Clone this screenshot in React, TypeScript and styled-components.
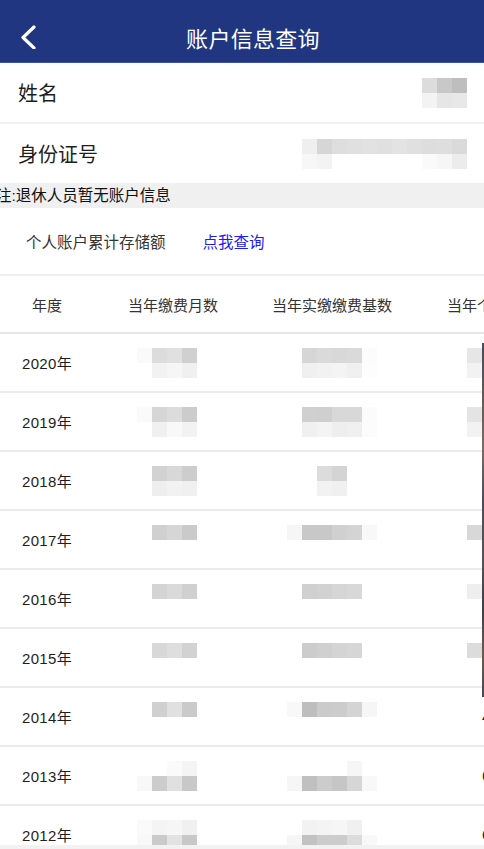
import React from "react";
import styled, { createGlobalStyle } from "styled-components";

const GlobalStyle = createGlobalStyle`
    html, body {
        margin: 0;
        padding: 0;
        background: #ffffff;
        font-family: "Liberation Sans", "Noto Sans CJK SC", sans-serif;
        overflow: hidden;
    }
`;

const Page = styled.div`
    position: relative;
    display: flex;
    flex-direction: column;
    width: 484px;
    height: 849px;
    overflow: hidden;
    background: #ffffff;
`;

const Header = styled.header`
    display: flex;
    align-items: center;
    flex: none;
    box-sizing: border-box;
    height: 63px;
    padding-top: 12px;
    background: #203680;
    border-bottom: 1px solid #3a52a6;
    color: #ffffff;
`;

const BackButton = styled.button`
    display: flex;
    align-items: center;
    justify-content: center;
    width: 22px;
    height: 30px;
    margin-left: 17px;
    padding: 0;
    border: none;
    background: transparent;
    color: #ffffff;
`;

const Title = styled.h1`
    flex: 1;
    margin: 0 0 0 -39px;
    padding-left: 22px;
    font-size: 22px;
    font-weight: 400;
    text-align: center;
    letter-spacing: 0.3px;
`;

const InfoRow = styled.div<{ $last?: boolean }>`
    display: flex;
    align-items: center;
    justify-content: space-between;
    flex: none;
    height: 59px;
    padding: 0 17px 0 18px;
    border-bottom: ${p => (p.$last ? "none" : "2px solid #f2f2f2")};
    font-size: 20px;
    color: #1e1e1e;
`;

const Note = styled.div`
    flex: none;
    height: 25px;
    line-height: 25px;
    text-indent: -4px;
    background: #f0f0f0;
    font-size: 15.5px;
    color: #111111;
    white-space: nowrap;
`;

const QueryRow = styled.div`
    display: flex;
    align-items: center;
    flex: none;
    gap: 37px;
    height: 66px;
    padding-left: 26px;
    border-bottom: 2px solid #f0f0f0;
    font-size: 15.5px;
`;

const QueryLabel = styled.span`
    color: #333333;
`;

const QueryLink = styled.a`
    color: #1c1cf5;
    text-decoration: none;
`;

const TableArea = styled.div`
    flex: 1;
    min-height: 0;
    overflow: hidden;
`;

const Table = styled.div`
    width: 562px;
`;

const TableRow = styled.div<{ $head?: boolean }>`
    display: grid;
    grid-template-columns: 94px 158px 160px 150px;
    align-items: center;
    height: ${p => (p.$head ? 56 : 57)}px;
    border-bottom: 2px solid ${p => (p.$head ? "#e6e6e6" : "#ebebeb")};
    font-size: 15px;
    color: ${p => (p.$head ? "#333333" : "#1e1e1e")};
`;

const Cell = styled.div<{ $pad?: number }>`
    display: flex;
    align-items: center;
    justify-content: ${p => (p.$pad === undefined ? "center" : "flex-start")};
    padding-left: ${p => p.$pad ?? 0}px;
    white-space: nowrap;
`;

const YearText = styled.span`
    letter-spacing: 0.3px;
`;

const Footer = styled.div`
    flex: none;
    height: 4px;
    background: #f2f2f2;
`;

const Mosaic = styled.div`
    display: flex;
    flex-direction: column;
`;

const MosaicLine = styled.div`
    display: flex;
`;

const Pixel = styled.div<{ $shade: string }>`
    width: 15px;
    height: 15px;
    background: ${p => p.$shade};
`;

const EdgeStrip = styled.div`
    position: absolute;
    right: 0;
    top: 343px;
    width: 2px;
    height: 354px;
    background: linear-gradient(180deg, #4a4a5a 0%, #6e5e58 20%, #7a6a60 30%, #4e4a5c 45%, #5c5056 60%, #3e3e4e 75%, #6c5a4e 88%, #4a4656 100%);
`;

const PixelBlock: React.FC<{ shades: string[][] }> = ({ shades }) => (
    <Mosaic>
        {shades.map((line, i) => (
            <MosaicLine key={i}>
                {line.map((shade, j) => (
                    <Pixel key={j} $shade={shade} />
                ))}
            </MosaicLine>
        ))}
    </Mosaic>
);

const nameShades = [
    ["#dcdcdc", "#c8c8c8", "#bebebe"],
    ["#f3f3f3", "#e6e6e6", "#e8e8e8"],
];

const idShades = [
    ["#efefef", "#d6d6d6", "#dedede", "#e0e0e0", "#e2e2e2", "#e0e0e0", "#e3e3e3", "#e0e0e0", "#dddddd", "#dedede", "#dadada"],
    ["#f7f7f7", "#f3f3f3", "#ffffff", "#ffffff", "#ffffff", "#ffffff", "#ffffff", "#ffffff", "#fafafa", "#f6f6f6", "#ececec"],
];

type YearRow = {
    year: number;
    months: string[][];
    base: string[][];
    last?: string[][];
    lastText?: string;
};

const rows: YearRow[] = [
    {
        year: 2020,
        months: [["#fafafa", "#dcdcdc", "#e0e0e0", "#d0d0d0"], ["#ffffff", "#f2f2f2", "#f6f6f6", "#f0f0f0"]],
        base: [["#ffffff", "#d6d6d6", "#dadada", "#d8d8d8", "#dadada", "#fcfcfc"], ["#ffffff", "#f0f0f0", "#f2f2f2", "#f4f4f4", "#f0f0f0", "#fdfdfd"]],
        last: [["#e6e6e6"], ["#f2f2f2"]],
    },
    {
        year: 2019,
        months: [["#fafafa", "#d6d6d6", "#dcdcdc", "#cccccc"], ["#ffffff", "#f0f0f0", "#f8f8f8", "#f2f2f2"]],
        base: [["#ffffff", "#d0d0d0", "#cfcfcf", "#d8d8d8", "#d8d8d8", "#fbfbfb"], ["#ffffff", "#f0f0f0", "#f4f4f4", "#eeeeee", "#f0f0f0", "#fcfcfc"]],
        last: [["#e4e4e4"], ["#f2f2f2"]],
    },
    {
        year: 2018,
        months: [["#ffffff", "#d2d2d2", "#d8d8d8", "#cdcdcd"], ["#ffffff", "#eeeeee", "#f2f2f2", "#f0f0f0"]],
        base: [["#ffffff", "#ffffff", "#dcdcdc", "#d4d4d4", "#ffffff", "#ffffff"], ["#ffffff", "#ffffff", "#f2f2f2", "#f0f0f0", "#ffffff", "#ffffff"]],
    },
    {
        year: 2017,
        months: [["#ffffff", "#d0d0d0", "#d6d6d6", "#cacaca"], ["#ffffff", "#ffffff", "#ffffff", "#ffffff"]],
        base: [["#f6f6f6", "#c8c8c8", "#c8c8c8", "#d0d0d0", "#d4d4d4", "#f8f8f8"], ["#ffffff", "#ffffff", "#ffffff", "#ffffff", "#ffffff", "#ffffff"]],
        last: [["#d8d8d8"], ["#ffffff"]],
    },
    {
        year: 2016,
        months: [["#ffffff", "#d4d4d4", "#dadada", "#d0d0d0"], ["#ffffff", "#ffffff", "#ffffff", "#ffffff"]],
        base: [["#ffffff", "#d0d0d0", "#d2d2d2", "#d6d6d6", "#d8d8d8", "#ffffff"], ["#ffffff", "#ffffff", "#ffffff", "#ffffff", "#ffffff", "#ffffff"]],
        last: [["#eeeeee"], ["#ffffff"]],
    },
    {
        year: 2015,
        months: [["#ffffff", "#d8d8d8", "#dedede", "#d2d2d2"], ["#ffffff", "#ffffff", "#ffffff", "#ffffff"]],
        base: [["#ffffff", "#cccccc", "#d0d0d0", "#d4d4d4", "#d6d6d6", "#ffffff"], ["#ffffff", "#ffffff", "#ffffff", "#ffffff", "#ffffff", "#ffffff"]],
        last: [["#dcdcdc"], ["#ffffff"]],
    },
    {
        year: 2014,
        months: [["#ffffff", "#d0d0d0", "#e0e0e0", "#cacaca"], ["#ffffff", "#ffffff", "#ffffff", "#ffffff"]],
        base: [["#f8f8f8", "#bebebe", "#cbcbcb", "#cccccc", "#d4d4d4", "#f6f6f6"], ["#ffffff", "#ffffff", "#ffffff", "#ffffff", "#ffffff", "#ffffff"]],
        lastText: "4",
    },
    {
        year: 2013,
        months: [["#ffffff", "#ffffff", "#fafafa", "#f4f4f4"], ["#f8f8f8", "#cccccc", "#e0e0e0", "#c8c8c8"]],
        base: [["#ffffff", "#ffffff", "#ffffff", "#ffffff", "#f6f6f6", "#ffffff"], ["#f6f6f6", "#c0c0c0", "#cccccc", "#c6c6c6", "#d6d6d6", "#f8f8f8"]],
        lastText: "6",
    },
    {
        year: 2012,
        months: [["#fafafa", "#f4f4f4", "#f6f6f6", "#f0f0f0"], ["#f8f8f8", "#cacaca", "#e2e2e2", "#c8c8c8"]],
        base: [["#ffffff", "#f2f2f2", "#f4f4f4", "#f6f6f6", "#f0f0f0", "#ffffff"], ["#f6f6f6", "#c2c2c2", "#cccccc", "#cccccc", "#dcdcdc", "#f8f8f8"]],
        lastText: "6",
    },
];

const BackIcon = () => (
    <svg width="16" height="24" viewBox="0 0 16 24" fill="none">
        <polyline points="14,2 3,12.5 14,23" stroke="#ffffff" strokeWidth="3.2" strokeLinecap="round" strokeLinejoin="round" />
    </svg>
);

export default function App() {
    return (
        <Page>
            <GlobalStyle />
            <Header>
                <BackButton aria-label="返回">
                    <BackIcon />
                </BackButton>
                <Title>账户信息查询</Title>
            </Header>

            <InfoRow>
                <span>姓名</span>
                <PixelBlock shades={nameShades} />
            </InfoRow>
            <InfoRow $last>
                <span>身份证号</span>
                <PixelBlock shades={idShades} />
            </InfoRow>

            <Note>注:退休人员暂无账户信息</Note>

            <QueryRow>
                <QueryLabel>个人账户累计存储额</QueryLabel>
                <QueryLink href="#">点我查询</QueryLink>
            </QueryRow>

            <TableArea>
                <Table>
                    <TableRow $head>
                        <Cell>年度</Cell>
                        <Cell>当年缴费月数</Cell>
                        <Cell>当年实缴缴费基数</Cell>
                        <Cell $pad={35}>当年个人缴费额</Cell>
                    </TableRow>
                    {rows.map(row => (
                        <TableRow key={row.year}>
                            <Cell>
                                <YearText>{row.year}年</YearText>
                            </Cell>
                            <Cell $pad={43}>
                                <PixelBlock shades={row.months} />
                            </Cell>
                            <Cell $pad={35}>
                                <PixelBlock shades={row.base} />
                            </Cell>
                            <Cell $pad={row.lastText ? 70 : 55}>
                                {row.last && <PixelBlock shades={row.last} />}
                                {row.lastText}
                            </Cell>
                        </TableRow>
                    ))}
                </Table>
            </TableArea>

            <Footer />
            <EdgeStrip />
        </Page>
    );
}
